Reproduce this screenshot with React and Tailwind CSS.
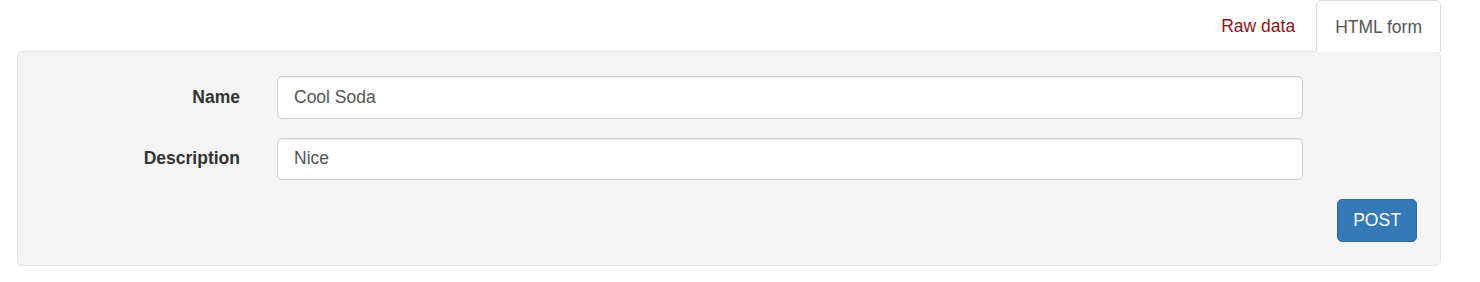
// Browsable API form panel: Raw data / HTML form tabs with a POST form

const fields = [
  { label: "Name", value: "Cool Soda" },
  { label: "Description", value: "Nice" },
];

const App = () => {
  return (
    <div className="bg-white w-[1480px] h-[282px] text-[17.5px] leading-[25px] text-[#333] font-['Liberation_Sans',Arial,sans-serif]">
      {/* Tabs */}
      <div className="flex justify-end pr-[39px] -mb-px relative z-10">
        <a className="px-[19px] pt-[14px] pb-[12px] mr-[2px] text-[#8f1414] cursor-pointer">
          Raw data
        </a>
        <a className="px-[18px] pt-[13.5px] pb-[12.5px] bg-white border border-b-0 border-[#ddd] rounded-t-[5px] text-[#555] cursor-pointer">
          HTML form
        </a>
      </div>

      {/* Well */}
      <div className="ml-[17px] mr-[39px] bg-[#f4f4f4] border border-[#e3e3e3] rounded-[5px] pl-[24px] pr-[23px] pt-[24px] pb-[23px]">
        <form className="flex flex-col gap-[19px]">
          {fields.map((f) => (
            <div key={f.label} className="flex items-center">
              <label className="w-[198px] text-right font-bold text-[#333]">
                {f.label}
              </label>
              <input
                type="text"
                defaultValue={f.value}
                className="ml-[37px] w-[1026px] h-[42.5px] px-[16px] bg-white border border-[#ccc] rounded-[5px] text-[#555] text-[17.5px] shadow-[inset_0_1px_1px_rgba(0,0,0,0.075)] outline-none"
              />
            </div>
          ))}
          <div className="flex justify-end">
            <button
              type="button"
              className="w-[80px] h-[42.5px] bg-[#337ab7] border border-[#2e6da4] rounded-[5px] text-white text-[17.5px]"
            >
              POST
            </button>
          </div>
        </form>
      </div>
    </div>
  );
};

export default App;
